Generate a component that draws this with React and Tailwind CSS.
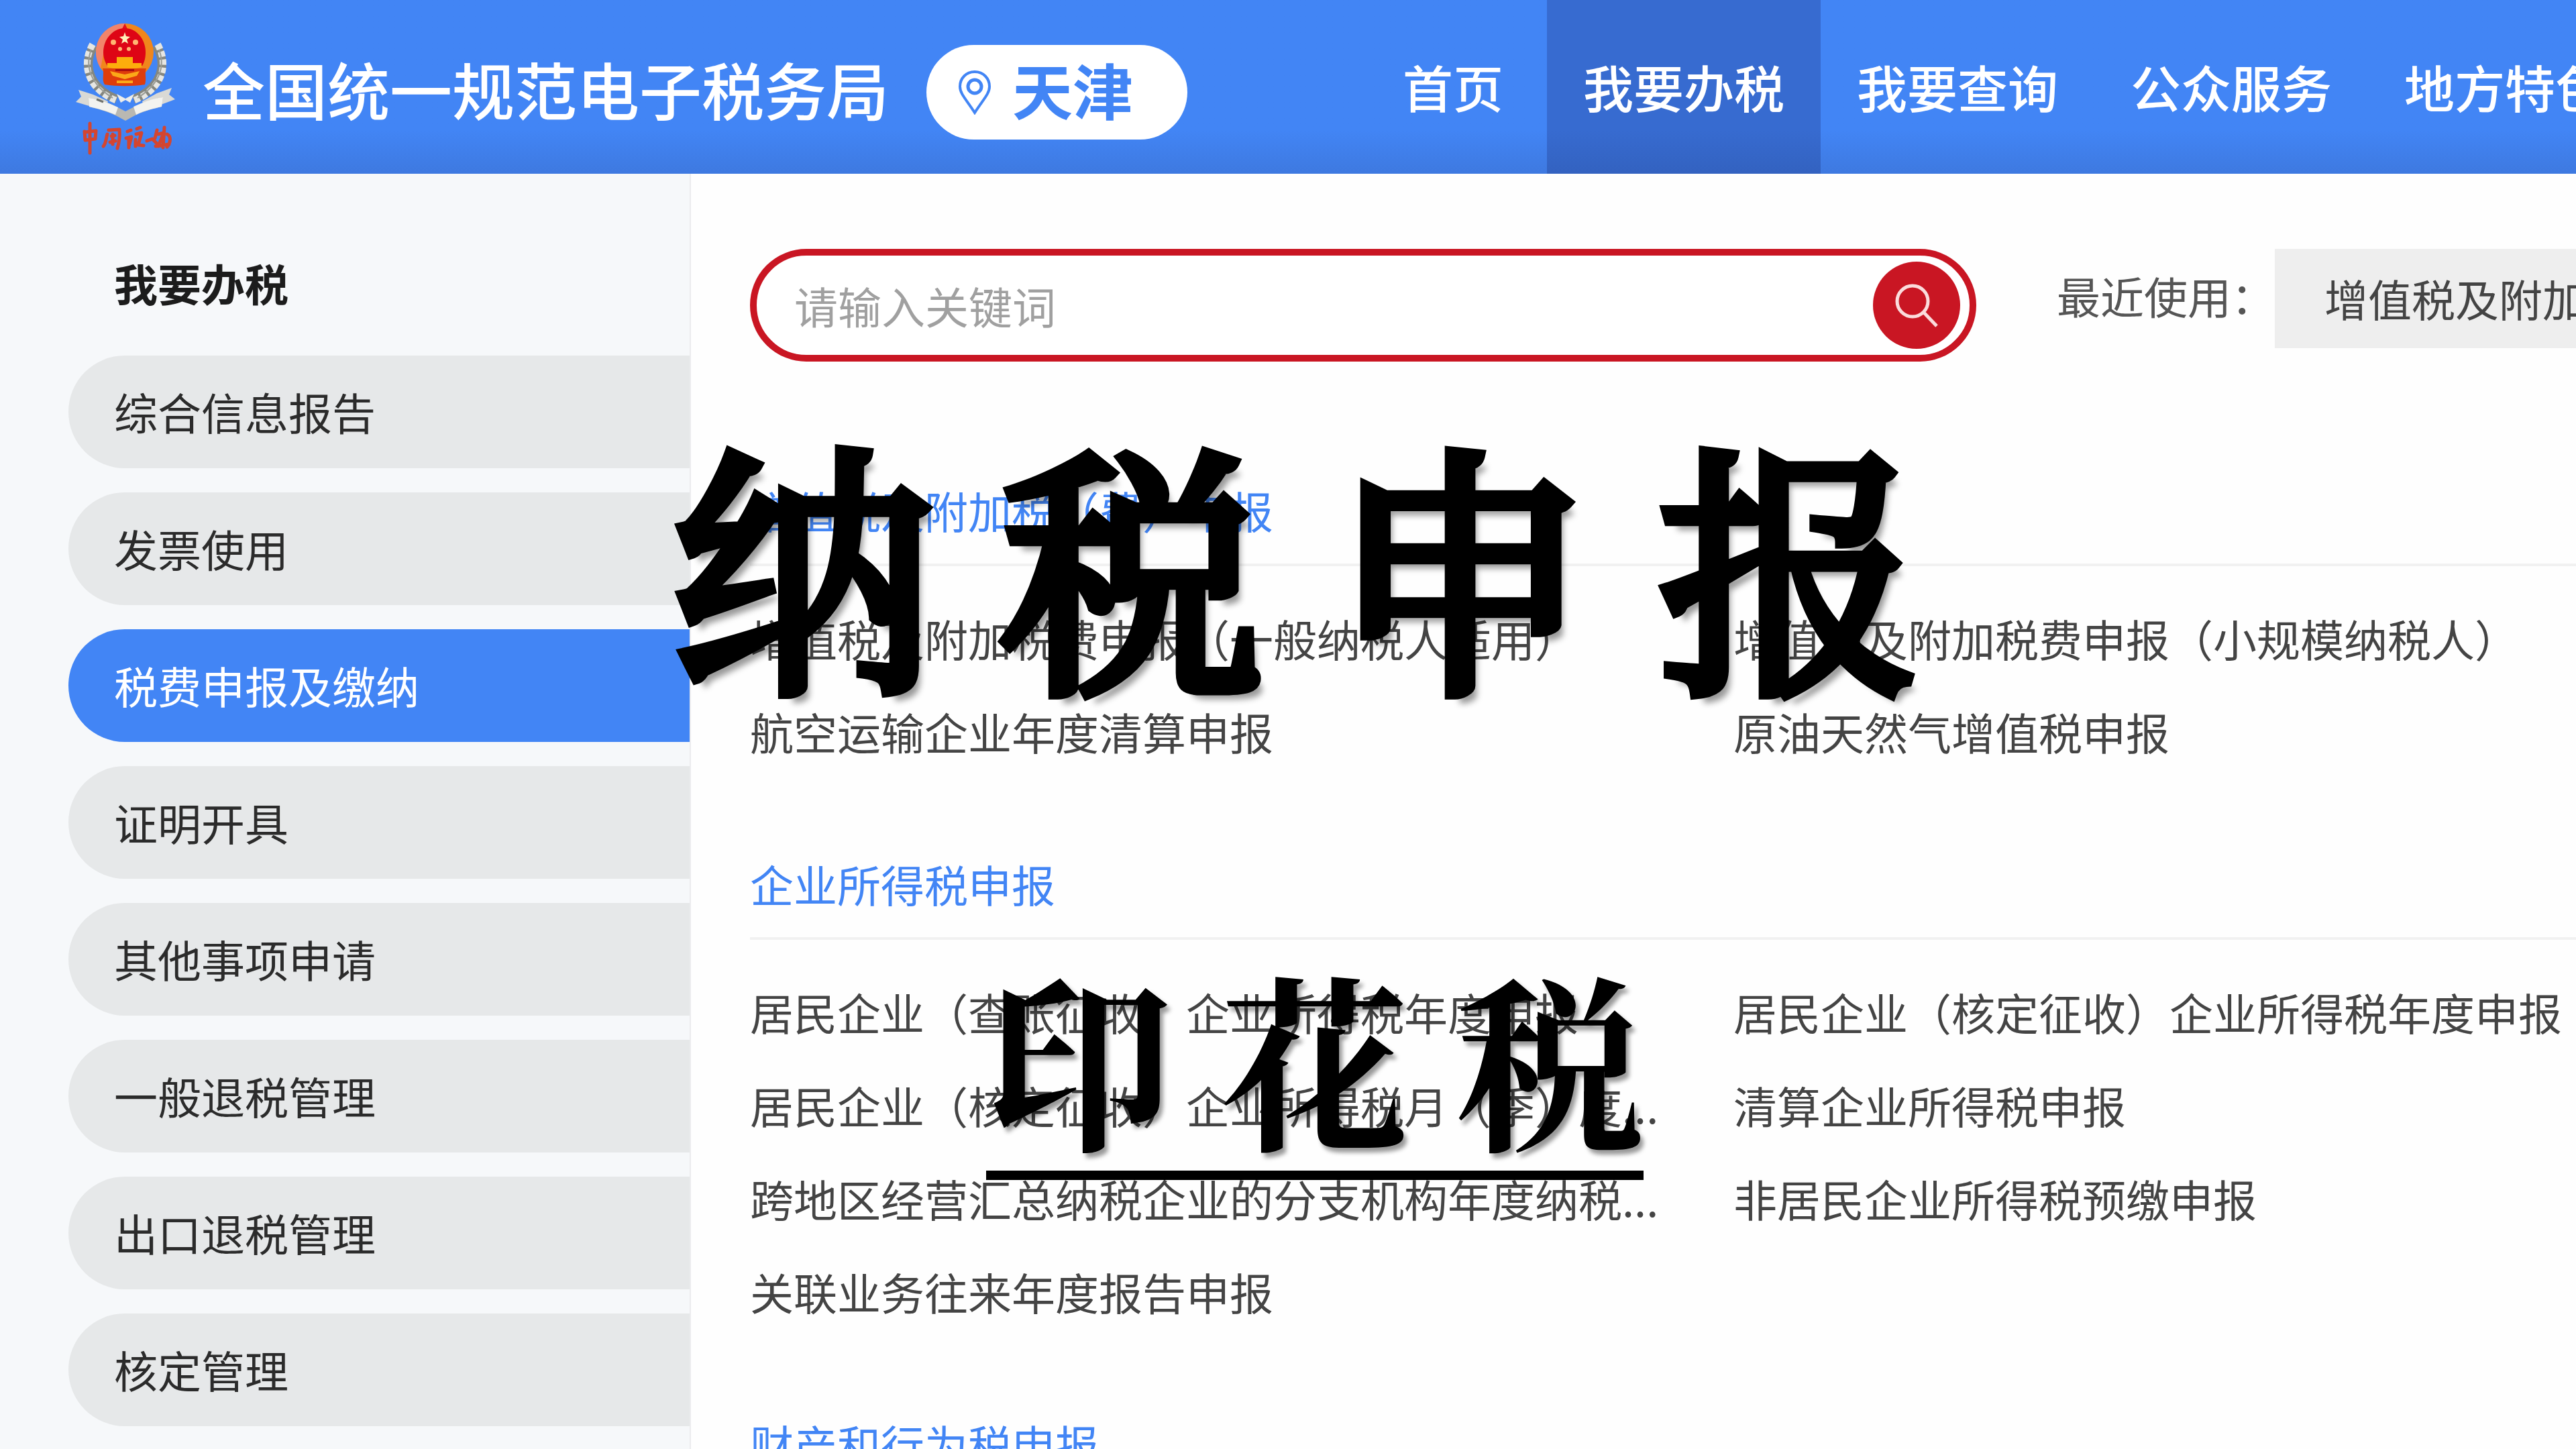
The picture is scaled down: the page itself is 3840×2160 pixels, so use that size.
import React from 'react';

const navItems = ['首页', '我要办税', '我要查询', '公众服务', '地方特色'];

const menuItems = [
  '综合信息报告',
  '发票使用',
  '税费申报及缴纳',
  '证明开具',
  '其他事项申请',
  '一般退税管理',
  '出口退税管理',
  '核定管理',
];

const sections = [
  {
    title: '增值税及附加税（费）申报',
    links: [
      '增值税及附加税费申报（一般纳税人适用）',
      '增值税及附加税费申报（小规模纳税人）',
      '航空运输企业年度清算申报',
      '原油天然气增值税申报',
    ],
  },
  {
    title: '企业所得税申报',
    links: [
      '居民企业（查账征收）企业所得税年度申报',
      '居民企业（核定征收）企业所得税年度申报',
      '居民企业（核定征收）企业所得税月（季）度...',
      '清算企业所得税申报',
      '跨地区经营汇总纳税企业的分支机构年度纳税...',
      '非居民企业所得税预缴申报',
      '关联业务往来年度报告申报',
    ],
  },
  { title: '财产和行为税申报', links: [] },
];

const Emblem = () => (
  <svg viewBox="0 0 150 204" className="w-[150px] h-[204px] shrink-0" aria-hidden="true">
    {/* Wheat ears */}
    <g fill="none">
      <path d="M28 40C10 70 22 104 62 120" stroke="#85877f" strokeWidth="13" />
      <path d="M121 40C139 70 127 104 87 120" stroke="#85877f" strokeWidth="13" />
      <path d="M26 38C8 70 20 106 62 122" stroke="#e6e6e2" strokeWidth="10" strokeDasharray="8 4" />
      <path d="M123 38C141 70 129 106 87 122" stroke="#e6e6e2" strokeWidth="10" strokeDasharray="8 4" />
      <path d="M24 46C14 72 24 98 56 118M125 46c10 26 0 52-32 72" stroke="#9a9c95" strokeWidth="2" />
    </g>
    {/* Ribbon */}
    <path d="M5 106l22 7 22 10-4 12-24-5-20-6 8-8z" fill="#d9d9d5" />
    <path d="M144 103l-22 8-22 12 4 12 24-7 21-8-9-7z" fill="#d9d9d5" />
    <path d="M20 118c20 2 36 10 55 20 19-10 36-18 56-21l-2 14c-22 5-36 10-54 21-18-11-34-16-54-21z" fill="#b9b8b2" />
    <path d="M20 118c18 2 30 8 44 14l-4 11c-14-6-26-9-39-12zM131 117c-18 2-30 8-44 14l4 12c14-7 26-9 38-12z" fill="#f3f3f0" />
    <path d="M62 112l13 7 13-7-6 13-7-4-7 4z" fill="#eeeeea" />
    <path d="M32 120l10 4" stroke="#6f716b" strokeWidth="3" />
    {/* National emblem */}
    <ellipse cx="74" cy="50" rx="43" ry="43" fill="#f0861c" />
    <path d="M41 74h65c-3 8 1 14-2 24-18 3-42 3-60 0-5-8 0-16-3-24z" fill="#df3d0c" />
    <path d="M74 7C50 7 31 26 31 50c0 9 3 17 7 24l8-42 28-20z" fill="#f2846a" />
    <path d="M74 7l5 10H69z" fill="#e2101a" />
    <path d="M74 14c17 0 31 16 31 36 0 9-2 15-5 20H48c-3-5-6-11-6-20 0-20 15-36 32-36z" fill="#de0515" />
    <path d="M62 57h24v9h13v6l-8 2H57l-9-2v-6h14z" fill="#fcae0c" />
    <path d="M52 78l22 5 22-5-4 7-18 5-18-5zM62 92h24v4H62z" fill="#fba918" />
    <path d="M60 75h28v3H60z" fill="#a80d10" />
    <path d="M74 20l2 6 6 1-5 4 2 6-5-3-5 3 2-6-5-4 6-1z" fill="#fff3b8" />
    <g fill="#ffb672">
      <circle cx="57" cy="35" r="4" />
      <circle cx="90" cy="35" r="4" />
      <circle cx="67" cy="45" r="3" />
      <circle cx="80" cy="45" r="3" />
    </g>
    {/* Brush signature */}
    <g fill="none" stroke="#d4452f" strokeWidth="5" strokeLinecap="round" strokeLinejoin="round">
      <path d="M22 156v44M14 168l1 13 15-2 1-12-16 2" />
      <path d="M42 190c4-4 4-12 6-18M50 166l16-1c1 10 0 18-3 28M54 175l5-1M52 184l8-2M56 172v15" />
      <path d="M78 168l5-2M76 178l8-2-4 14M80 180v12M92 164l5-2M91 172l8-2-5 18 8 1M90 180v10" />
      <path d="M107 182l8-3 6 6M122 166l-3 12M124 172l8-2-8 20M133 162l-2 30M137 172c6 3 6 12 0 19M120 190l20-3" />
    </g>
  </svg>
);

const PinIcon = () => (
  <svg viewBox="0 0 48 66" className="w-[48px] h-[66px]" fill="none" stroke="#4285f5" aria-hidden="true">
    <path d="M24 2C11 2 2 12 2 24c0 11 10 20 22 39 12-19 22-28 22-39C46 12 37 2 24 2z" strokeWidth="4" />
    <circle cx="24" cy="24" r="10" strokeWidth="5" />
  </svg>
);

const SearchIcon = () => (
  <svg viewBox="0 0 66 66" className="size-[66px]" fill="none" stroke="#fbdcdc" strokeWidth="5" aria-hidden="true">
    <circle cx="27" cy="27" r="23" />
    <path d="M43 43l20 21" />
  </svg>
);

const Header = () => (
  <header className="flex items-center h-[259px] pl-28 bg-linear-to-b from-[#4285f5] from-75% to-[#3e79e0] text-white overflow-hidden">
    <Emblem />
    <div className="flex items-center shrink-0 pt-4 ml-10 gap-14">
      <h1 className="pb-3 text-[93px] leading-[120px] font-medium whitespace-nowrap">全国统一规范电子税务局</h1>
      <button className="flex items-center h-[141px] w-[389px] pl-12 gap-8 rounded-full bg-white text-[#4285f5] text-[90px] leading-none font-bold">
        <PinIcon />
        <span className="pb-3">天津</span>
      </button>
    </div>
    <nav className="flex ml-64 h-full shrink-0">
      {navItems.map((item) => (
        <a
          key={item}
          href="#"
          className={`flex items-center justify-center min-w-[280px] px-[54px] text-[75px] font-medium whitespace-nowrap ${
            item === '我要办税' ? 'bg-linear-to-b from-[#376bd0] from-75% to-[#3362c0]' : ''
          }`}
        >
          {item}
        </a>
      ))}
    </nav>
  </header>
);

const Sidebar = () => (
  <aside className="w-[1030px] shrink-0 pl-[102px] pt-[112px] bg-[#f6f8fa] border-r-2 border-[#ececee]">
    <h2 className="pl-[68px] mb-[59px] text-[65px] leading-[100px] font-bold text-[#1c1c1c]">我要办税</h2>
    <ul className="flex flex-col gap-9">
      {menuItems.map((item) => (
        <li key={item}>
          <a
            href="#"
            className={`flex items-center h-[168px] pl-[68px] rounded-l-full text-[65px] ${
              item === '税费申报及缴纳' ? 'bg-[#4285f5] text-white' : 'bg-[#e6e8e9] text-[#2b2b2b]'
            }`}
          >
            {item}
          </a>
        </li>
      ))}
    </ul>
  </aside>
);

const SearchBar = () => (
  <div className="flex items-start">
    <form className="flex items-center shrink-0 w-[1828px] h-[168px] pl-14 pr-3.5 border-[10px] border-[#c91623] rounded-full bg-white">
      <input
        type="text"
        aria-label="请输入关键词"
        placeholder="请输入关键词"
        className="flex-1 min-w-0 text-[65px] leading-[100px] outline-none placeholder:text-[#a0a0a0]"
      />
      <button
        type="button"
        aria-label="搜索"
        className="flex items-center justify-center size-[130px] rounded-full bg-[#c91623]"
      >
        <SearchIcon />
      </button>
    </form>
    <span className="ml-[120px] text-[65px] leading-[138px] text-[#555] whitespace-nowrap">最近使用：</span>
    <a href="#" className="h-[148px] px-[74px] bg-[#eee] text-[65px] leading-[146px] text-[#444] whitespace-nowrap">
      增值税及附加税费申报
    </a>
  </div>
);

const Section = ({ title, links }) => (
  <section className="mb-[111px]">
    <h3 className="h-[130px] mb-[38px] border-b-4 border-[#f1f1f1] text-[65px] leading-[92px] text-[#4285f5]">{title}</h3>
    <ul className="grid grid-cols-[1466px_1fr] text-[65px] leading-[139px] text-[#444] whitespace-nowrap">
      {links.map((link) => (
        <li key={link}>
          <a href="#">{link}</a>
        </li>
      ))}
    </ul>
  </section>
);

const App = () => (
  <div className="relative flex flex-col h-screen overflow-hidden bg-[#fefefe] font-['Noto_Sans_CJK_SC',sans-serif]">
    <Header />
    <div className="flex flex-1 min-h-0">
      <Sidebar />
      <main className="flex-1 min-w-0 pl-[88px] pt-28 overflow-hidden">
        <SearchBar />
        <div className="mt-[175px]">
          {sections.map((section) => (
            <Section key={section.title} {...section} />
          ))}
        </div>
      </main>
    </div>

    {/* Caption laid over the page */}
    <div className="absolute left-[1003px] top-[614px] font-['Noto_Serif_CJK_SC','Noto_Sans_CJK_SC',serif] text-black whitespace-nowrap pointer-events-none">
      <p className="text-[390px] leading-[440px] font-normal [-webkit-text-stroke:20px_black] [stroke-linejoin:round] [text-shadow:12px_16px_10px_rgba(0,0,0,0.4)]">
        纳 税 申 报
      </p>
      <p className="w-fit ml-[467px] mt-[361px] pb-3.5 text-[280px] leading-[316px] font-bold border-b-[14px] border-black [text-shadow:5px_7px_6px_rgba(0,0,0,0.4)]">
        印 花 税
      </p>
    </div>
  </div>
);

export default App;
